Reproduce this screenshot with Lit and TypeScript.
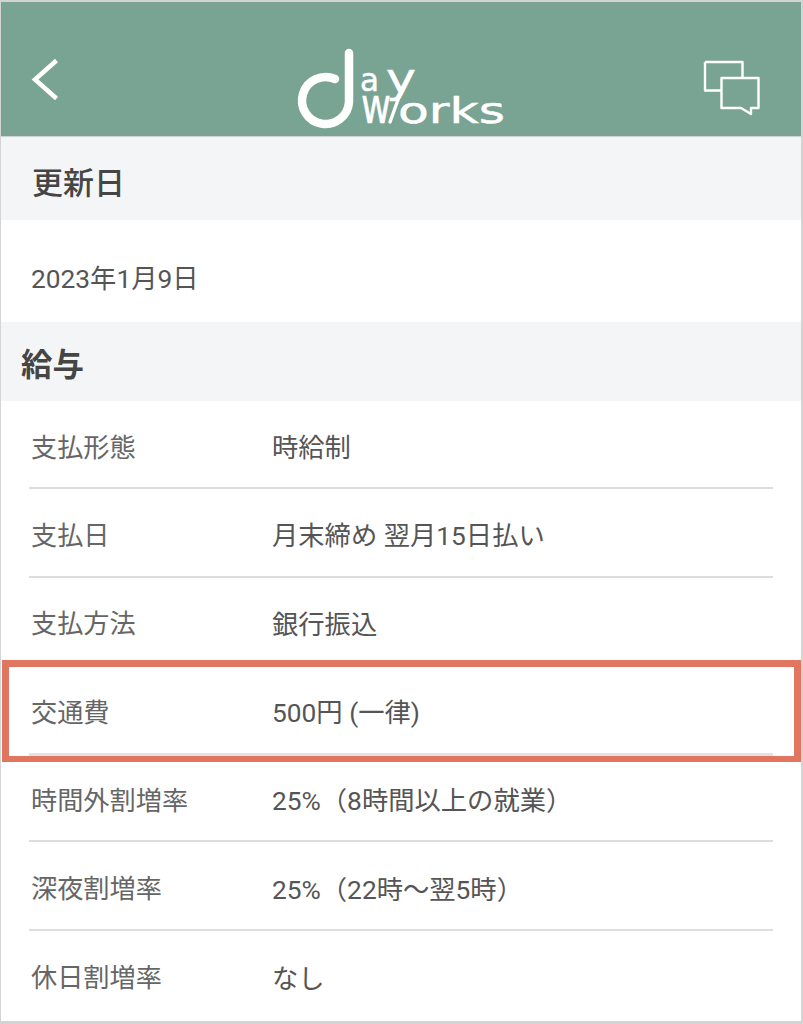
import { LitElement, html, css } from "lit";
import { customElement } from "lit/decorators.js";
import { classMap } from "lit/directives/class-map.js";

const rows: [string, string][] = [
  ["支払形態", "時給制"],
  ["支払日", "月末締め 翌月15日払い"],
  ["支払方法", "銀行振込"],
  ["交通費", "500円 (一律)"],
  ["時間外割増率", "25%（8時間以上の就業）"],
  ["深夜割増率", "25%（22時～翌5時）"],
  ["休日割増率", "なし"],
];

@customElement("app-root")
export class AppRoot extends LitElement {
  static styles = css`
    :host {
      display: block;
      position: relative;
      width: 803px;
      height: 1024px;
      box-sizing: border-box;
      overflow: hidden;
      background: #fff;
      border: solid #d4d4d4;
      border-width: 2px 2px 3px 1px;
      font-family: Roboto, "Noto Sans CJK JP", sans-serif;
    }
    .bar {
      height: 134px;
      background: #79a392;
      border-bottom: 1px solid #cfd4d2;
      display: flex;
      align-items: flex-start;
    }
    .bar svg { display: block; flex: none; }
    .section {
      background: #f4f5f7;
      color: #454545;
      display: flex;
      align-items: center;
    }
    .s1 { height: 83px; padding: 4px 0 0 31px; box-sizing: border-box; font-size: 31px; font-weight: 500; }
    .s2 { height: 79px; padding-left: 20px; font-size: 31.5px; font-weight: 700; }
    .date {
      height: 102px;
      box-sizing: border-box;
      padding: 10px 0 0 30px;
      display: flex;
      align-items: center;
      font-size: 26.3px;
      color: #555;
    }
    .row {
      box-sizing: border-box;
      height: 88.3px;
      margin: 0 28px;
      padding: 3px 0 0 2px;
      display: flex;
      align-items: center;
      border-bottom: 2px solid #dcdddd;
      font-size: 26.2px;
      color: #666;
    }
    .row:last-child { border-bottom: none; }
    .row.marked {
      height: 89.8px;
      margin-bottom: -1.5px;
      border-bottom: 3.6px solid #e2e2e2;
    }
    .label { width: 241px; flex: none; }
    .value { color: #555; font-size: 26.3px; }
    .mark {
      position: absolute;
      left: 1px;
      top: 658px;
      width: 799px;
      height: 102px;
      box-sizing: border-box;
      border: 7px solid #e07560;
      border-bottom-width: 6px;
    }
    .logo-text {
      font-family: "DejaVu Sans", sans-serif;
      font-weight: 400;
      fill: #fff;
      stroke: #fff;
      stroke-width: 0.5px;
    }
  `;

  render() {
    return html`
      <div class="bar">
        <svg width="800" height="134" viewBox="1 2 800 134" fill="none" stroke="#fff">
          <path d="M56.5 60.5L35 79.5L56.5 98.5" stroke-width="4.5"/>
          <path d="M335 79A23.5 23.5 0 1 0 349 102V53" stroke-width="8.5" stroke-linecap="round"/>
          <text class="logo-text" x="360" y="91" font-size="32" textLength="19" lengthAdjust="spacingAndGlyphs">a</text>
          <text class="logo-text" x="386" y="92" font-size="40" textLength="30" lengthAdjust="spacingAndGlyphs">y</text>
          <path d="M399 97L390 122" stroke-width="3.4" stroke-linecap="round"/>
          <text class="logo-text" x="361" y="123" font-size="50" textLength="30" lengthAdjust="spacingAndGlyphs">w</text>
          <text class="logo-text" x="398" y="123" font-size="36" textLength="107" lengthAdjust="spacingAndGlyphs">orks</text>
          <path d="M705 62H742.5V78M721.5 90.5H705V62" stroke-width="2.4" stroke-linejoin="round"/>
          <path d="M721.5 78H758.5V108H751V114L741 108H721.5Z" stroke-width="2.4" stroke-linejoin="round"/>
        </svg>
      </div>
      <div class="section s1">更新日</div>
      <div class="date">2023年1月9日</div>
      <div class="section s2">給与</div>
      <div>
        ${rows.map(
          ([k, v], i) => html`<div class=${classMap({ row: true, marked: i === 3 })}><span class="label">${k}</span><span class="value">${v}</span></div>`
        )}
      </div>
      <div class="mark"></div>
    `;
  }
}
